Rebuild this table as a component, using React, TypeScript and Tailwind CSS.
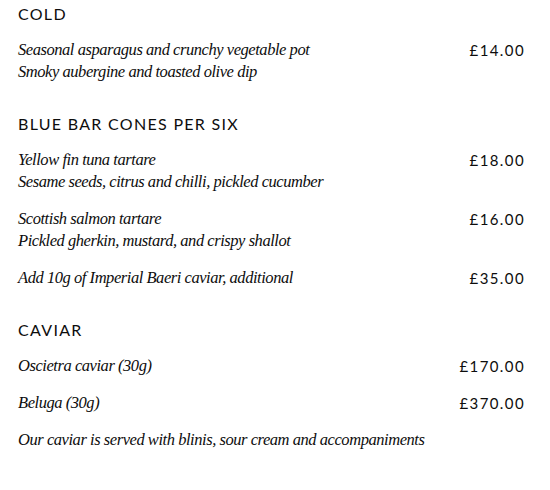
import React from "react";

type Item = { lines: string[]; price?: string };
type Section = { title: string; items: Item[] };

const sections: Section[] = [
  {
    title: "COLD",
    items: [
      {
        lines: [
          "Seasonal asparagus and crunchy vegetable pot",
          "Smoky aubergine and toasted olive dip",
        ],
        price: "£14.00",
      },
    ],
  },
  {
    title: "BLUE BAR CONES PER SIX",
    items: [
      {
        lines: [
          "Yellow fin tuna tartare",
          "Sesame seeds, citrus and chilli, pickled cucumber",
        ],
        price: "£18.00",
      },
      {
        lines: [
          "Scottish salmon tartare",
          "Pickled gherkin, mustard, and crispy shallot",
        ],
        price: "£16.00",
      },
      {
        lines: ["Add 10g of Imperial Baeri caviar, additional"],
        price: "£35.00",
      },
    ],
  },
  {
    title: "CAVIAR",
    items: [
      { lines: ["Oscietra caviar (30g)"], price: "£170.00" },
      { lines: ["Beluga (30g)"], price: "£370.00" },
      { lines: ["Our caviar is served with blinis, sour cream and accompaniments"] },
    ],
  },
];

const App = () => {
  return (
    <div className="w-[550px] h-[490px] bg-white text-[#0d0d0d] pl-[18px] pr-[25px] pt-[3px]">
      {sections.map((section) => (
        <div key={section.title} className="flex flex-col gap-[15px] pb-[30px]">
          <div className="font-['Lato',sans-serif] text-[16px] leading-[22px] tracking-[1.3px] mb-[-1px]">
            {section.title}
          </div>
          {section.items.map((item, i) => (
            <div key={i} className="flex justify-between items-start">
              <div className="font-['Liberation_Serif',serif] italic text-[16.5px] leading-[22px] tracking-[-0.45px]">
                {item.lines.map((line) => (
                  <div key={line}>{line}</div>
                ))}
              </div>
              {item.price && (
                <div className="font-['Lato',sans-serif] text-[15px] leading-[22px] tracking-[1.4px]">
                  {item.price}
                </div>
              )}
            </div>
          ))}
        </div>
      ))}
    </div>
  );
};

export default App;
